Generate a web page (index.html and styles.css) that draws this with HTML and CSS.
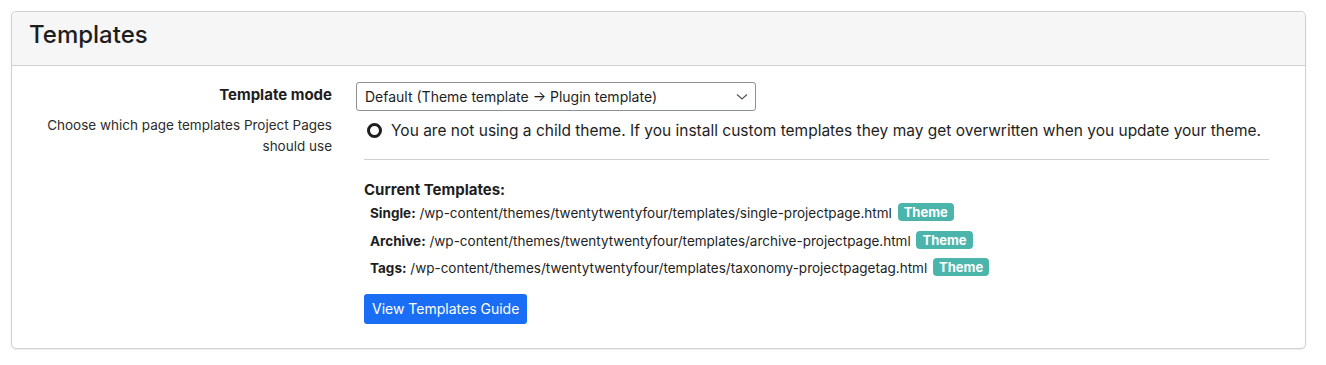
FILE: index.html
```html
<html>
  <head>
    <link rel="stylesheet" href="styles.css">
  </head>
  <body>
    <div class="card">
      <div class="card-header">
        <h2>Templates</h2>
      </div>
      <div class="card-body">
        <div class="form-row">
          <div class="label-col">
            <label for="templateMode">Template mode</label>
            <p class="desc">Choose which page templates Project Pages should use</p>
          </div>
          <div class="field-col">
            <div class="select-wrap">
              <select id="templateMode" class="mode-select">
                <option>Default (Theme template → Plugin template)</option>
              </select>
              <svg class="chevron" width="12" height="8" viewBox="0 0 12 8"><path d="M1 1.5 L6 6 L11 1.5" fill="none" stroke="#555" stroke-width="1.2"/></svg>
            </div>
            <div class="notice">
              <span class="ring"></span>
              You are not using a child theme. If you install custom templates they may get overwritten when you update your theme.
            </div>
            <hr>
            <h4 class="current-title">Current Templates:</h4>
            <ul class="template-list">
              <li><b>Single:</b> /wp-content/themes/twentytwentyfour/templates/single-projectpage.html <span class="badge">Theme</span></li>
              <li><b>Archive:</b> /wp-content/themes/twentytwentyfour/templates/archive-projectpage.html <span class="badge">Theme</span></li>
              <li><b>Tags:</b> /wp-content/themes/twentytwentyfour/templates/taxonomy-projectpagetag.html <span class="badge">Theme</span></li>
            </ul>
            <a class="btn" href="#">View Templates Guide</a>
          </div>
        </div>
      </div>
    </div>
  </body>
</html>
```

FILE: styles.css
```css
body { margin: 0; padding: 11px 20px 0 11px; font-family: Inter, "Noto Sans", sans-serif; color: #1e1e1e; background: #fff; }
.card { border: 1px solid #d0d0d0; border-radius: 5px; box-shadow: 0 1px 2px rgba(0,0,0,0.08); background: #fff; width: 1293px; }
.card-header { background: #f6f6f6; border-bottom: 1px solid #d0d0d0; height: 54px; box-sizing: border-box; padding: 8px 0 0 17px; border-radius: 5px 5px 0 0; }
.card-header h2 { margin: 0; font-size: 24px; font-weight: 500; color: #1e1e1e; }
.card-body { padding: 16px 36px 24px 0; }
.form-row { display: flex; gap: 24px; }
.label-col { width: 320px; text-align: right; flex: none; }
.label-col label { display: block; font-size: 15px; font-weight: 700; margin-top: 3px; }
.desc { margin: 11px 0 0 0; font-size: 13.5px; line-height: 21px; color: #2c2c2c; padding-left: 20px; }
.field-col { flex: 1; }
.select-wrap { position: relative; width: 400px; }
.mode-select { width: 400px; height: 29px; border: 1px solid #8c8f94; border-radius: 3px; background: #fff; font-family: inherit; font-size: 14px; color: #1e1e1e; padding: 0 24px 0 8px; appearance: none; -webkit-appearance: none; }
.chevron { position: absolute; right: 8px; top: 11px; pointer-events: none; }
.notice { display: flex; align-items: center; gap: 9px; margin: 10px 0 0 11px; font-size: 15.5px; color: #1e1e1e; }
.ring { width: 9px; height: 9px; border: 3px solid #1e1e1e; border-radius: 50%; flex: none; }
hr { border: 0; border-top: 1px solid #cfcfcf; margin: 19px 0 0 8px; }
.current-title { margin: 20px 0 0 8px; font-size: 15px; font-weight: 700; }
.template-list { list-style: none; margin: 1px 0 0 14px; padding: 0; font-size: 13.5px; }
.template-list li { height: 27.5px; line-height: 27.5px; }
.template-list b { font-weight: 700; }
.badge { display: inline-block; line-height: 18px; background: #4bb5ab; color: #fff; font-weight: 700; font-size: 13px; padding: 0 6px; border-radius: 4px; margin-left: 2px; vertical-align: 1px; }
.btn { display: inline-block; margin: 11px 0 0 8px; background: #1a6ef5; color: #fff; text-decoration: none; font-size: 14px; padding: 6px 8px 7px; border-radius: 3px; }
```
